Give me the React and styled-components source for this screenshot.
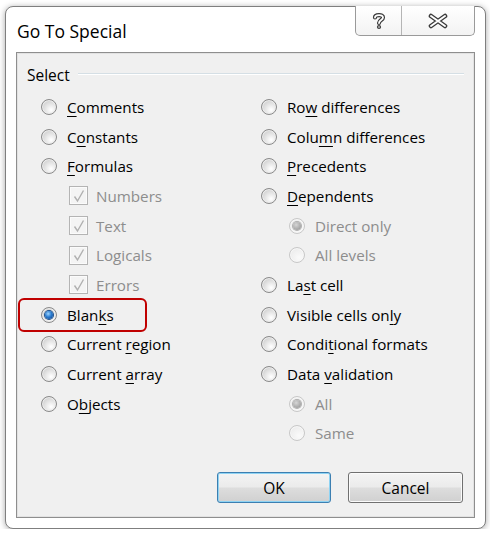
import React from 'react';
import styled, { createGlobalStyle } from 'styled-components';

const GlobalStyle = createGlobalStyle`
  html, body {
    margin: 0;
    padding: 0;
    background: #ffffff;
  }
  body {
    font-family: "Open Sans", "Noto Sans", "DejaVu Sans", sans-serif;
    color: #111;
  }
`;

const Window = styled.div`
  box-sizing: border-box;
  width: 481px;
  height: 523px;
  margin: 6px 0 0 5px;
  background: #ffffff;
  border: 1px solid #7f7f7f;
  border-radius: 8px;
  box-shadow: 0 1px 6px rgba(0, 0, 0, 0.35);
  display: flex;
  flex-direction: column;
`;

const TitleBar = styled.div`
  height: 45px;
  display: flex;
  align-items: flex-start;
  justify-content: space-between;
  padding: 0 10px 0 11px;
`;

const Title = styled.div`
  font-size: 17.5px;
  line-height: 22px;
  padding-top: 13px;
  color: #000;
`;

const Caption = styled.div`
  display: flex;
  height: 29px;
  margin-top: -1px;
  border: 1px solid #9a9a9a;
  border-top: none;
  border-radius: 0 0 5px 5px;
  background: linear-gradient(#ffffff, #f3f3f3);
  overflow: hidden;
`;

const CaptionButton = styled.div`
  width: ${p => p.$w}px;
  display: flex;
  align-items: center;
  justify-content: center;
  & + & {
    border-left: 1px solid #b5b5b5;
  }
`;

const Client = styled.div`
  flex: 1;
  margin: 0 10px 10px 10px;
  background: #f0f0f0;
  border: 1px solid #8e8e8e;
  box-shadow: inset 0 0 0 1px #e2e2e2;
  display: flex;
  flex-direction: column;
`;

const Legend = styled.div`
  display: flex;
  align-items: center;
  gap: 8px;
  height: 20px;
  margin: 12px 10px 0 10px;
  font-size: 15.5px;
  color: #000;
  &::after {
    content: '';
    flex: 1;
    height: 1px;
    background: #d5dfe5;
    border-bottom: 1px solid #ffffff;
    margin-top: -3px;
  }
`;

const Columns = styled.div`
  display: grid;
  grid-template-columns: 220px 1fr;
  margin: 7px 0 0 24px;
`;

const Column = styled.div`
  display: flex;
  flex-direction: column;
`;

const Row = styled.div`
  position: relative;
  height: 29.7px;
  display: flex;
  align-items: center;
  gap: ${p => (p.$check ? 8 : 10)}px;
  padding-left: ${p => (p.$indent ? 28 : 0)}px;
  font-size: 15.2px;
  color: ${p => (p.$disabled ? '#8d8d8d' : '#000')};
  white-space: nowrap;
  ${p =>
    p.$marked &&
    `
    &::before {
      content: '';
      position: absolute;
      left: -23px;
      top: -2px;
      width: 125px;
      height: 30px;
      border: 2px solid #c00000;
      border-radius: 6px;
    }
  `}
`;

const Radio = styled.span`
  box-sizing: border-box;
  width: 16px;
  height: 16px;
  flex: none;
  border-radius: 50%;
  border: 1px solid ${p => (p.$disabled ? '#c8c8c8' : '#8a8a8a')};
  background: ${p =>
    p.$disabled
      ? 'radial-gradient(circle at 65% 70%, #fafafa, #e8e8e8)'
      : 'radial-gradient(circle at 65% 70%, #fdfdfd 5%, #c4c4c4 95%)'};
  box-shadow: inset 0 0 0 1px ${p => (p.$disabled ? '#f7f7f7' : '#ededed')};
  display: flex;
  align-items: center;
  justify-content: center;
  &::after {
    content: '';
    display: ${p => (p.$checked ? 'block' : 'none')};
    width: 8px;
    height: 8px;
    border-radius: 50%;
    background: ${p =>
      p.$disabled
        ? 'radial-gradient(circle at 40% 35%, #d6d6d6, #8f8f8f)'
        : 'radial-gradient(circle at 40% 35%, #9fd6ff 0%, #2a7cd1 45%, #0d3f86 100%)'};
    box-shadow: 0 0 0 1px ${p => (p.$disabled ? '#b0b0b0' : '#1b4f8c')};
  }
`;

const Check = styled.span`
  box-sizing: border-box;
  width: 19px;
  height: 19px;
  flex: none;
  border: 1px solid #b4b4b4;
  background: #f4f4f4;
  box-shadow: inset 0 0 0 1px #fbfbfb;
  display: flex;
  align-items: center;
  justify-content: center;
`;

const Key = styled.u`
  text-decoration-thickness: 1px;
  text-underline-offset: 3px;
`;

const Footer = styled.div`
  margin-top: auto;
  display: flex;
  justify-content: flex-end;
  gap: 17px;
  padding: 0 11px 14px 0;
`;

const Button = styled.button`
  box-sizing: border-box;
  width: ${p => p.$w}px;
  height: 31px;
  font-family: inherit;
  font-size: 15.5px;
  color: #000;
  border-radius: 3px;
  border: 1px solid ${p => (p.$default ? '#3c7fb1' : '#707070')};
  background: linear-gradient(#f4f4f4 0%, #ebebeb 48%, #dddddd 52%, #d0d0d0 100%);
  box-shadow: inset 0 0 0 1px ${p => (p.$default ? '#8fd3f3' : '#fbfbfb')};
  padding: 0;
`;

const u = (text, i) =>
  i == null ? (
    text
  ) : (
    <>
      {text.slice(0, i)}
      <Key>{text[i]}</Key>
      {text.slice(i + 1)}
    </>
  );

const HelpGlyph = () => (
  <svg width="14" height="18" viewBox="0 0 14 18">
    <g fill="none" strokeLinecap="round" strokeLinejoin="round">
      <path d="M3 5.5 C3 2.5 11 2 11 5.5 C11 8 7 8 7 11" stroke="#3b3b3b" strokeWidth="4.2" />
      <path d="M3 5.5 C3 2.5 11 2 11 5.5 C11 8 7 8 7 11" stroke="#ffffff" strokeWidth="1.8" />
      <circle cx="7" cy="15" r="2.1" fill="#3b3b3b" />
      <circle cx="7" cy="15" r="0.8" fill="#ffffff" />
    </g>
  </svg>
);

const CloseGlyph = () => (
  <svg width="22" height="16" viewBox="0 0 22 16">
    <g fill="none" strokeLinecap="round">
      <path d="M4 3 L18 13 M18 3 L4 13" stroke="#3b3b3b" strokeWidth="4.6" />
      <path d="M4 3 L18 13 M18 3 L4 13" stroke="#ffffff" strokeWidth="2" />
    </g>
  </svg>
);

const CheckMark = () => (
  <svg width="14" height="14" viewBox="0 0 14 14">
    <path d="M2.5 7.5 L5.5 12 L11.5 1.5" fill="none" stroke="#b0b0b0" strokeWidth="1.4" />
  </svg>
);

const left = [
  { label: 'Comments', key: 0 },
  { label: 'Constants', key: 1 },
  { label: 'Formulas', key: 0 },
  { label: 'Numbers', check: true },
  { label: 'Text', check: true },
  { label: 'Logicals', check: true },
  { label: 'Errors', check: true },
  { label: 'Blanks', key: 4, checked: true, marked: true },
  { label: 'Current region', key: 8 },
  { label: 'Current array', key: 8 },
  { label: 'Objects', key: 1 }
];

const right = [
  { label: 'Row differences', key: 2 },
  { label: 'Column differences', key: 4 },
  { label: 'Precedents', key: 0 },
  { label: 'Dependents', key: 0 },
  { label: 'Direct only', sub: true, checked: true },
  { label: 'All levels', sub: true },
  { label: 'Last cell', key: 2 },
  { label: 'Visible cells only', key: 16 },
  { label: 'Conditional formats', key: 5 },
  { label: 'Data validation', key: 5 },
  { label: 'All', sub: true, checked: true },
  { label: 'Same', sub: true }
];

const Option = ({ item }) => {
  if (item.check) {
    return (
      <Row $indent $disabled $check>
        <Check>
          <CheckMark />
        </Check>
        {item.label}
      </Row>
    );
  }
  return (
    <Row $indent={item.sub} $disabled={item.sub} $marked={item.marked}>
      <Radio $checked={item.checked} $disabled={item.sub} />
      <span>{u(item.label, item.key)}</span>
    </Row>
  );
};

export default function App() {
  return (
    <>
      <GlobalStyle />
      <Window>
        <TitleBar>
          <Title>Go To Special</Title>
          <Caption>
            <CaptionButton $w={45}>
              <HelpGlyph />
            </CaptionButton>
            <CaptionButton $w={72}>
              <CloseGlyph />
            </CaptionButton>
          </Caption>
        </TitleBar>
        <Client>
          <Legend>Select</Legend>
          <Columns>
            <Column>
              {left.map(item => (
                <Option key={item.label} item={item} />
              ))}
            </Column>
            <Column>
              {right.map(item => (
                <Option key={item.label} item={item} />
              ))}
            </Column>
          </Columns>
          <Footer>
            <Button $w={114} $default>
              OK
            </Button>
            <Button $w={115}>Cancel</Button>
          </Footer>
        </Client>
      </Window>
    </>
  );
}
